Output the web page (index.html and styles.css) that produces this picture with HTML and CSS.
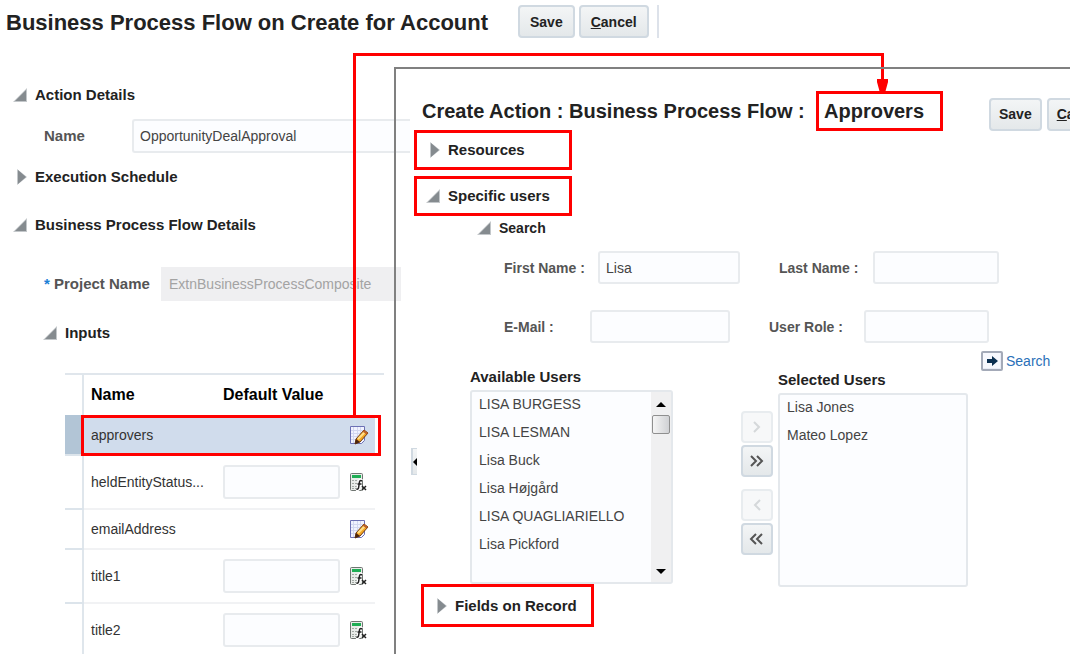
FILE: index.html
```html
<!DOCTYPE html>
<html lang="en">
<head>
  <meta charset="UTF-8">
  <meta name="viewport" content="width=device-width, initial-scale=1.0">
  <title>Business Process Flow on Create for Account</title>
  <link rel="stylesheet" href="styles.css">
</head>
<body>
  <!-- shared icons -->
  <svg class="symbols" aria-hidden="true">
    <symbol id="open" viewBox="0 0 14 14"><path d="M14 0v14H0z" fill="#c3c7ca"/><path d="M13 2v11H2z" fill="#858b8f"/></symbol>
    <symbol id="closed" viewBox="0 0 14 18"><path d="M4 1l10 8-10 8z" fill="#c3c7ca"/><path d="M5 2l8 7-8 7z" fill="#858b8f"/></symbol>
    <symbol id="edit" viewBox="0 0 20 20">
      <path d="M1.500 1.500h14v14l-3 3h-11z" fill="#f1f3ff" stroke="#6c70b4"/>
      <path d="M4.500 2v16M2 5.500h13M2 8.500h13M2 11.500h10M2 14.500h8M8.500 2v16M11.500 2v11" stroke="#d3d7f0" fill="none"/>
      <path d="M7 14l8-9 4 3-8 9-5 2z" fill="#f5a623" stroke="#6b3a12"/>
      <path d="M9 14l7-7" stroke="#ffe08a" stroke-width="2"/>
      <path d="M15 5l4 3-1.500 1.500-4-3z" fill="#c0632a"/>
      <path d="M7 14l4 3-5 2z" fill="#4a2410"/>
    </symbol>
    <symbol id="calc" viewBox="0 0 20 20">
      <rect x="1.500" y="1.500" width="12" height="17" rx="1" fill="#e9ece9" stroke="#6f7571"/>
      <rect x="3" y="3" width="9" height="3" fill="#1fae54"/>
      <path d="M3 8.500h9M3 11.500h6M3 14.500h5M3 16.500h5" stroke="#a2a9a4" stroke-dasharray="2 1"/>
      <path d="M13 9c-2-1-2.500 0-2.700 2l-.6 4c-.2 2-1 2.500-2.200 2M8.500 12h4" fill="none" stroke="#fff" stroke-width="4"/>
      <path d="M13 9c-2-1-2.500 0-2.700 2l-.6 4c-.2 2-1 2.500-2.200 2M8.500 12h4" fill="none" stroke="#222" stroke-width="1.500"/>
      <path d="M13 14l4 4M17 14l-4 4" stroke="#222" stroke-width="1.500"/>
    </symbol>
  </svg>

  <header class="page-header">
    <h1>Business Process Flow on Create for Account</h1>
    <button type="button">Save</button>
    <button type="button"><u>C</u>ancel</button>
    <span class="divider"></span>
  </header>

  <main class="details">
    <h2><svg><use href="#open"/></svg>Action Details</h2>
    <div class="field name-field">
      <label for="name">Name</label>
      <input type="text" id="name" value="OpportunityDealApproval">
    </div>
    <h2 class="execution"><svg class="closed"><use href="#closed"/></svg>Execution Schedule</h2>
    <h2 class="flow"><svg><use href="#open"/></svg>Business Process Flow Details</h2>
    <div class="field project-field">
      <label for="project"><span class="required">*</span> Project Name</label>
      <input type="text" id="project" value="ExtnBusinessProcessComposite" disabled>
    </div>
    <h3><svg><use href="#open"/></svg>Inputs</h3>

    <table class="inputs">
      <thead>
        <tr><th class="handle"></th><th>Name</th><th>Default Value</th><th class="action"></th><th class="edge"></th></tr>
      </thead>
      <tbody>
        <tr class="selected short">
          <td class="handle"></td><td>approvers</td><td></td>
          <td class="action"><button type="button" aria-label="Edit approvers"><svg><use href="#edit"/></svg></button></td>
        </tr>
        <tr>
          <td class="handle"></td><td>heldEntityStatus...</td>
          <td><input type="text" aria-label="heldEntityStatus"></td>
          <td class="action"><button type="button" aria-label="Expression for heldEntityStatus"><svg><use href="#calc"/></svg></button></td>
        </tr>
        <tr class="short">
          <td class="handle"></td><td>emailAddress</td><td></td>
          <td class="action"><button type="button" aria-label="Edit emailAddress"><svg><use href="#edit"/></svg></button></td>
        </tr>
        <tr>
          <td class="handle"></td><td>title1</td>
          <td><input type="text" aria-label="title1"></td>
          <td class="action"><button type="button" aria-label="Expression for title1"><svg><use href="#calc"/></svg></button></td>
        </tr>
        <tr>
          <td class="handle"></td><td>title2</td>
          <td><input type="text" aria-label="title2"></td>
          <td class="action"><button type="button" aria-label="Expression for title2"><svg><use href="#calc"/></svg></button></td>
        </tr>
      </tbody>
    </table>
  </main>

  <!-- callout from the approvers row to the panel title -->
  <svg class="callout" aria-hidden="true">
    <path d="M354.500 417V54.500H882.500V82" fill="none" stroke="#f00" stroke-width="3"/>
    <path d="M877 79h11v3l-3 11h-5l-3-11z" fill="#f00"/>
    <rect x="82.500" y="416.500" width="297" height="38" fill="none" stroke="#f00" stroke-width="3"/>
  </svg>

  <section class="panel">
    <header class="panel-header">
      <h1>Create Action : Business Process Flow :</h1>
      <span class="marked approvers">Approvers</span>
      <button type="button">Save</button>
      <button type="button"><u>C</u>ancel</button>
    </header>

    <h2 class="marked"><svg class="closed"><use href="#closed"/></svg>Resources</h2>
    <h2 class="marked"><svg><use href="#open"/></svg>Specific users</h2>

    <h3><svg><use href="#open"/></svg>Search</h3>
    <form class="search">
      <div class="search-row">
        <label for="first">First Name :</label>
        <input type="text" id="first" value="Lisa">
        <label for="last">Last Name :</label>
        <input type="text" id="last">
      </div>
      <div class="search-row second">
        <label for="email">E-Mail :</label>
        <input type="text" id="email">
        <label for="role">User Role :</label>
        <input type="text" id="role">
      </div>
      <a class="go" href="#">
        <svg viewBox="0 0 22 20"><rect x="1" y="1" width="20" height="18" rx="1" fill="#e9ecf6" stroke="#a4aab8" stroke-width="2"/><path d="M2 2h17v15H2z" fill="#f7f8fd"/><path d="M6 8h5V5l6 5-6 5v-3H6z" fill="#0b2f50"/></svg>Search</a>
    </form>

    <div class="shuttle">
      <div class="users">
        <label for="available">Available Users</label>
        <div class="list-box">
          <select id="available" multiple>
            <option>LISA BURGESS</option>
            <option>LISA LESMAN</option>
            <option>Lisa Buck</option>
            <option>Lisa Højgård</option>
            <option>LISA QUAGLIARIELLO</option>
            <option>Lisa Pickford</option>
          </select>
          <div class="scrollbar">
            <svg viewBox="0 0 10 6"><path d="M0 6l5-5 5 5z"/></svg>
            <span class="thumb"></span>
            <svg class="down" viewBox="0 0 10 6"><path d="M0 0h10L5 5z"/></svg>
          </div>
        </div>
      </div>
      <div class="moves">
        <button type="button" aria-label="Move" disabled><svg viewBox="0 0 16 16"><path d="M5 3l5 5-5 5"/></svg></button>
        <button type="button" aria-label="Move all"><svg viewBox="0 0 16 16"><path d="M2 3l5 5-5 5M8 3l5 5-5 5"/></svg></button>
        <button type="button" aria-label="Remove" disabled class="remove"><svg viewBox="0 0 16 16"><path d="M11 3L6 8l5 5"/></svg></button>
        <button type="button" aria-label="Remove all"><svg viewBox="0 0 16 16"><path d="M7 3L2 8l5 5M13 3L8 8l5 5"/></svg></button>
      </div>
      <div class="users chosen">
        <label for="selected">Selected Users</label>
        <div class="list-box">
          <select id="selected" multiple>
            <option>Lisa Jones</option>
            <option>Mateo Lopez</option>
          </select>
        </div>
      </div>
    </div>

    <h2 class="marked record"><svg class="closed"><use href="#closed"/></svg>Fields on Record</h2>

    <button type="button" class="splitter" aria-label="Collapse"><svg viewBox="0 0 4 8"><path d="M4 0v8L0 4z"/></svg></button>
  </section>
</body>
</html>
```
FILE: styles.css
```css
* {
  box-sizing: border-box;
}

body {
  margin: 0;
  position: relative;
  height: 100vh;
  overflow: hidden;
  background: #fff;
  color: #333;
  font: 14px/20px "Liberation Sans", Arial, sans-serif;
}

h1, h2, h3 {
  margin: 0;
  color: #222;
}

h1 {
  font-size: 22px;
  white-space: nowrap;
}

h2, h3 {
  display: flex;
  align-items: center;
  gap: 8px;
  font-size: 15px;
  line-height: 20px;
}

h2 svg, h3 svg {
  flex: none;
  width: 14px;
  height: 14px;
}

h2 svg.closed {
  height: 18px;
}

.symbols {
  display: none;
}

button {
  font: bold 14px/20px "Liberation Sans", Arial, sans-serif;
  color: #222;
  height: 33px;
  padding: 0 10px;
  border: 2px solid #d0d9e1;
  border-radius: 4px;
  background: linear-gradient(#f3f5f6, #e4e8ea);
}

input {
  height: 34px;
  padding: 0 6px;
  border: 2px solid #e8ebee;
  border-radius: 3px;
  background: #fcfdff;
  color: #444;
  font: inherit;
}

label {
  color: #555;
  font-size: 15px;
  font-weight: bold;
  white-space: nowrap;
}

.page-header {
  display: flex;
  gap: 4px;
  padding: 5px 6px 0;
}

.page-header h1 {
  flex: none;
  width: 488px;
  margin-right: 20px;
  line-height: 36px;
  height: 34px;
}

.divider {
  width: 2px;
  height: 33px;
  margin-left: 4px;
  background: #dde2ea;
}

/* left form */
.details {
  width: 410px;
  padding: 46px 0 0 13px;
  overflow: hidden;
}

.field {
  display: flex;
  align-items: center;
  padding-left: 31px;
}

.name-field {
  margin-top: 14px;
}

.name-field label {
  width: 88px;
}

.name-field input {
  flex: 1 0 auto;
  border-right: 0;
  border-radius: 3px 0 0 3px;
}

.execution {
  margin-top: 14px;
}

.flow {
  margin-top: 28px;
}

.project-field {
  margin-top: 32px;
}

.project-field label {
  width: 117px;
}

.required {
  color: #1b7fd6;
}

.project-field input {
  width: 240px;
  border-color: #efeff1;
  border-radius: 0;
  background: #efeff1;
  color: #a3a3a3;
}

.details h3 {
  margin: 22px 0 30px 30px;
}

.inputs {
  width: 319px;
  margin-left: 52px;
  border-collapse: collapse;
  table-layout: fixed;
}

.inputs th {
  height: 41px;
  padding: 0 0 0 7px;
  border-top: 2px solid #e0e6ec;
  color: #000;
  font-size: 16px;
  text-align: left;
}

.inputs td {
  height: 54px;
  padding: 0 0 0 7px;
  border-bottom: 2px solid #f1f2f4;
  white-space: nowrap;
}

.inputs .short td {
  height: 40px;
}

.inputs .handle {
  width: 18px;
  padding: 0;
  border-right: 2px solid #dfe6ec;
  border-bottom-color: #dce4eb;
}

.inputs th:nth-child(2) {
  width: 133px;
}

.inputs .action {
  width: 34px;
  padding: 0;
}

.inputs .edge {
  width: 9px;
  padding: 0;
}

.inputs .selected td {
  background: #d0dcec;
}

.inputs .selected .handle {
  background: #b2c5d6;
}

.inputs input {
  width: 117px;
  display: block;
}

.inputs button {
  display: block;
  width: 20px;
  height: 20px;
  margin-left: 8px;
  padding: 0;
  border: 0;
  background: none;
}

.inputs svg {
  display: block;
  width: 20px;
  height: 20px;
}

.callout {
  position: absolute;
  top: 0;
  left: 0;
  width: 100%;
  height: 100%;
  pointer-events: none;
}

/* panel over the page */
.panel {
  position: absolute;
  top: 67px;
  right: 0;
  bottom: 0;
  left: 394px;
  padding: 23px 0 0 18px;
  border: 2px solid #808080;
  border-width: 2px 0 0 2px;
  overflow: hidden;
}

.marked {
  border: 3px solid #f00;
}

.panel-header {
  display: flex;
  align-items: center;
  height: 38px;
  padding-left: 8px;
}

.panel-header h1 {
  flex: none;
  width: 394px;
  font-size: 20px;
}

.approvers {
  flex: none;
  width: 127px;
  height: 40px;
  margin-right: 46px;
  padding-left: 5px;
  color: #222;
  font-size: 20px;
  font-weight: bold;
  line-height: 34px;
}

.panel-header button {
  flex: none;
  margin: 6px 5px 0 0;
  padding: 0 8px;
}

h2.marked {
  width: 158px;
  height: 40px;
  margin-bottom: 6px;
  padding-left: 9px;
}

.panel h3 {
  margin: -4px 0 13px 63px;
  font-size: 14px;
}

.search {
  display: flex;
  flex-direction: column;
}

.search label {
  font-size: 14px;
}

.search-row {
  display: grid;
  grid-template-columns: 94px 142px 39px 94px 126px;
  align-items: center;
  padding-left: 90px;
}

.search-row input {
  height: 33px;
}

.search-row label:nth-of-type(2) {
  grid-column: 4;
}

.second {
  grid-template-columns: 86px 140px 39px 95px 125px;
  margin-top: 26px;
}

.go {
  display: flex;
  align-items: center;
  gap: 3px;
  margin: 8px 0 0 567px;
  color: #2a70b8;
  text-decoration: none;
}

.go svg {
  width: 22px;
  height: 20px;
}

.shuttle {
  display: flex;
  margin: -4px 0 0 56px;
}

.users label {
  display: block;
  margin-bottom: 3px;
  color: #222;
}

.list-box {
  display: flex;
  width: 203px;
  height: 194px;
  border: 2px solid #e4e8ec;
  border-radius: 3px;
  background: #fcfdff;
}

.chosen {
  margin-top: 3px;
}

.chosen .list-box {
  width: 190px;
}

.list-box select {
  flex: 1;
  min-width: 0;
  height: 100%;
  padding: 0;
  border: 0;
  outline: 0;
  overflow: hidden;
  background: none;
  color: #444;
  font: inherit;
}

.list-box option {
  min-height: 28px;
  padding: 4px 7px;
  line-height: 20px;
}

.scrollbar {
  display: flex;
  flex-direction: column;
  align-items: center;
  width: 20px;
  padding: 9px 0 7px;
  background: #f0f0f1;
}

.scrollbar svg {
  width: 10px;
  height: 6px;
}

.scrollbar .down {
  margin-top: auto;
}

.thumb {
  width: 18px;
  height: 19px;
  margin-top: 8px;
  border: 1px solid #8f8f8f;
  border-radius: 2px;
  background: linear-gradient(90deg, #f5f5f5, #d0d1d4);
}

.moves {
  display: flex;
  flex-direction: column;
  gap: 2px;
  margin: 44px 5px 0 68px;
}

.moves button {
  width: 32px;
  height: 32px;
  padding: 0;
}

.moves button:disabled {
  border-color: #e8ecef;
  background: #f7f8f9;
}

.moves .remove {
  margin-top: 10px;
}

.moves svg {
  display: block;
  width: 16px;
  height: 16px;
  margin: auto;
  fill: none;
  stroke: #555;
  stroke-width: 2;
}

.moves button:disabled svg {
  stroke: #d5d8da;
}

h2.record {
  width: 173px;
  height: 43px;
  margin: -3px 0 0 7px;
}

.splitter {
  position: absolute;
  top: 379px;
  left: 15px;
  width: 6px;
  height: 27px;
  padding: 0;
  border-width: 1px 0 1px 2px;
  border-radius: 0;
}

.splitter svg {
  display: block;
  width: 4px;
  height: 8px;
}
```
